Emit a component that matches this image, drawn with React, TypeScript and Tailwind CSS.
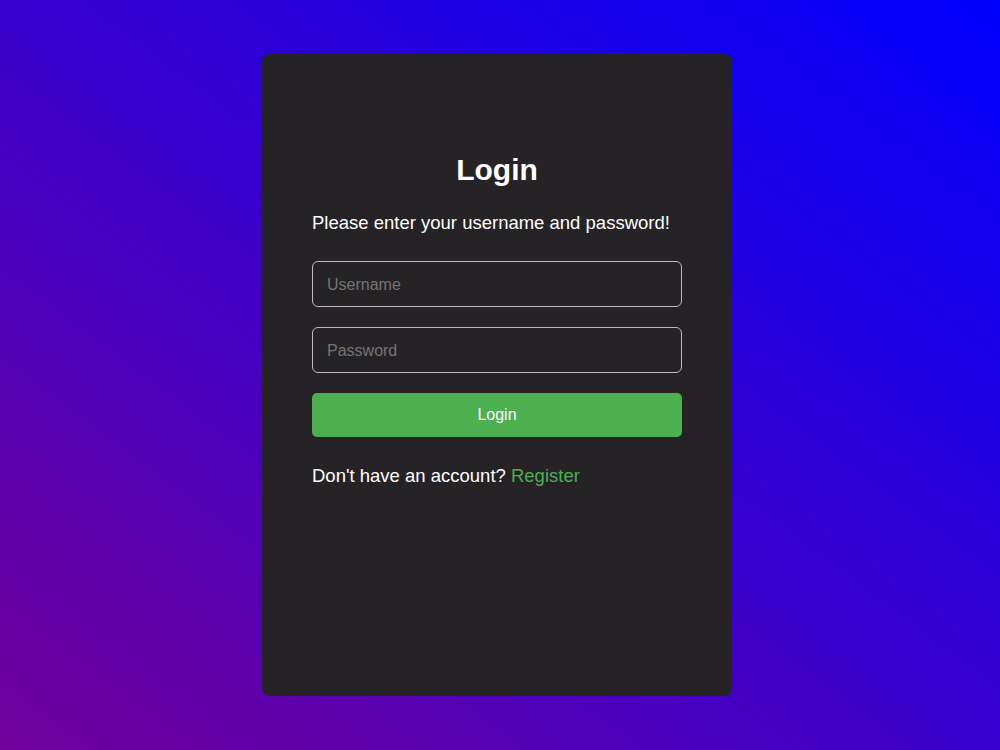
import React from "react";

export default function App() {
  return (
    <div
      className="w-[1000px] h-[750px] flex items-center justify-center pr-[6px] bg-[linear-gradient(to_top_right,#72009a,#0000ff)]"
      style={{ fontFamily: '"Liberation Sans", Arial, sans-serif' }}
    >
      <div className="w-[470px] h-[642px] bg-[#252326] rounded-[8px] px-[50px] pt-[98px] flex flex-col">
        <h2 className="text-[30px] leading-[36px] font-bold text-white text-center">Login</h2>
        <p className="mt-[21px] text-[18.5px] leading-[28px] text-white">
          Please enter your username and password!
        </p>
        <input
          type="text"
          placeholder="Username"
          className="mt-[24px] h-[46px] w-full rounded-[6px] border border-[#bdbdbd] bg-transparent px-[14px] pt-[2px] text-[16px] text-white placeholder:text-[#757575] outline-none"
        />
        <input
          type="password"
          placeholder="Password"
          className="mt-[20px] h-[46px] w-full rounded-[6px] border border-[#bdbdbd] bg-transparent px-[14px] pt-[2px] text-[16px] text-white placeholder:text-[#757575] outline-none"
        />
        <button className="mt-[20px] h-[44px] w-full rounded-[5px] bg-[#4caf50] text-white text-[16px]">
          Login
        </button>
        <p className="mt-[25px] text-[18.5px] leading-[28px] text-white">
          Don't have an account? <a className="text-[#4caf50]">Register</a>
        </p>
      </div>
    </div>
  );
}
